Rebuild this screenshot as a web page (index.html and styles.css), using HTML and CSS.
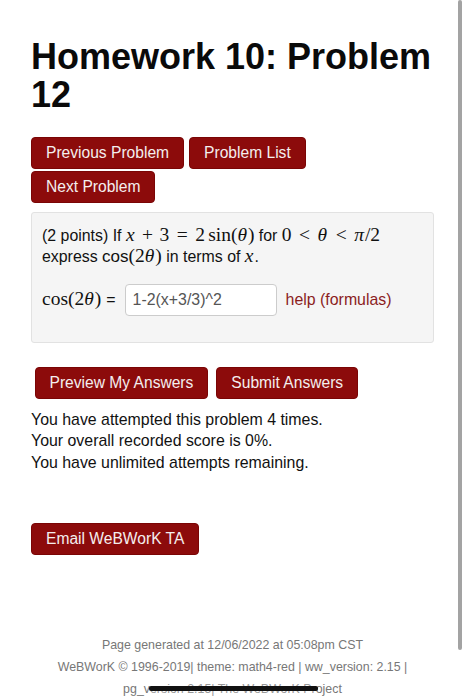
FILE: index.html
```html
<!DOCTYPE html>
<html lang="en">
<head>
<meta charset="utf-8">
<title>Homework 10: Problem 12</title>
<link rel="stylesheet" href="styles.css">
</head>
<body>
<div class="page">
  <h1 class="title">Homework 10: Problem 12</h1>
  <div class="nav">
    <a class="btn">Previous Problem</a>
    <a class="btn">Problem List</a>
    <a class="btn">Next Problem</a>
  </div>

  <div class="problem">
    <div class="qtext">(2 points) If <span class="m"><span class="mi">x</span><span class="bin">+</span>3<span class="rel">=</span>2<span class="fn">sin</span>(<span class="mi">θ</span>)</span> for <span class="m">0<span class="rel">&lt;</span><span class="mi">θ</span><span class="rel">&lt;</span><span class="mi">π</span>/2</span><br>express <span class="sans-fn">cos</span><span class="m">(2<span class="mi">θ</span>)</span> in terms of <span class="m"><span class="mi">x</span></span>.</div>
    <div class="answer-row">
      <span class="label"><span class="m">cos(2<span class="mi">θ</span>)</span><span class="eq">=</span></span>
      <span class="input">1-2(x+3/3)^2</span>
      <a class="help">help (formulas)</a>
    </div>
  </div>

  <div class="submit-row">
    <a class="btn">Preview My Answers</a>
    <a class="btn">Submit Answers</a>
  </div>

  <div class="attempts">
    <div>You have attempted this problem 4 times.</div>
    <div>Your overall recorded score is 0%.</div>
    <div>You have unlimited attempts remaining.</div>
  </div>

  <div class="email">
    <a class="btn">Email WeBWorK TA</a>
  </div>

  <div class="footer">
    <div>Page generated at 12/06/2022 at 05:08pm CST</div>
    <div>WeBWorK © 1996-2019| theme: math4-red | ww_version: 2.15 |</div>
    <div>pg_v<span class="redacted">ersion 2.15| The WeBWorK Pr</span>oject</div>
  </div>
</div>
<div class="scrollbar"></div>
</body>
</html>
```

FILE: styles.css
```css
html, body {
  margin: 0;
  padding: 0;
  background: #ffffff;
}

body {
  font-family: "Liberation Sans", Arial, sans-serif;
  font-size: 15.9px;
  line-height: 21.5px;
  color: #111111;
}

.page {
  padding: 0 31px;
}

.title {
  margin: 37.5px 0 0;
  font-size: 36px;
  line-height: 38px;
  font-weight: bold;
  color: #0a0a0a;
}

.nav {
  margin-top: 23.5px;
  display: flex;
  flex-wrap: wrap;
  gap: 2px 5px;
  max-width: 320px;
}

.btn {
  display: inline-flex;
  align-items: center;
  box-sizing: border-box;
  height: 32px;
  padding: 0 14px;
  background: #8c0b0b;
  border: 1px solid #7a0505;
  border-radius: 4px;
  color: #f4eeee;
  font-size: 15.6px;
  text-decoration: none;
  white-space: nowrap;
}

.problem {
  margin-top: 9px;
  border: 1px solid #e2e2e2;
  background: #f5f5f5;
  border-radius: 3px;
  padding: 11.5px 10px 26px 10px;
}

.qtext {
  line-height: 21.5px;
}

.m {
  font-family: "Liberation Serif", "Times New Roman", serif;
  font-size: 19.5px;
  line-height: 1;
}

.mi {
  font-style: italic;
  padding-right: 0.05em;
}

.bin {
  margin: 0 0.33em;
}

.rel {
  margin: 0 0.385em;
}

.fn {
  margin-left: 0.167em;
}

.sans-fn {
  font-size: 17px;
  line-height: 1;
}

.answer-row {
  margin-top: 16.5px;
  display: flex;
  align-items: center;
  height: 32px;
}

.label {
  display: inline-flex;
  align-items: baseline;
}

.eq {
  margin-left: 5px;
}

.input {
  box-sizing: border-box;
  margin-left: 9px;
  width: 152px;
  height: 32px;
  display: inline-flex;
  align-items: center;
  padding: 0 7px;
  background: #ffffff;
  border: 1px solid #cccccc;
  border-radius: 4px;
  color: #555555;
}

.help {
  margin-left: 9px;
  color: #8b1d1d;
  text-decoration: none;
}

.submit-row {
  margin-top: 24px;
  padding-left: 3.5px;
  display: flex;
  gap: 8px;
}

.attempts {
  margin-top: 9.5px;
}

.email {
  margin-top: 50px;
  display: flex;
}

.footer {
  margin-top: 79px;
  text-align: center;
  font-size: 12.4px;
  line-height: 22px;
  color: #777777;
}

.redacted {
  position: relative;
  color: #999999;
}

.redacted::after {
  content: "";
  position: absolute;
  left: -1px;
  right: -2px;
  top: 4px;
  height: 5px;
  background: #111111;
  border-radius: 2px;
}

.scrollbar {
  position: fixed;
  top: 0;
  left: 458px;
  width: 3.5px;
  height: 650px;
  background: #a3a3a3;
  border-radius: 2px;
}
```
